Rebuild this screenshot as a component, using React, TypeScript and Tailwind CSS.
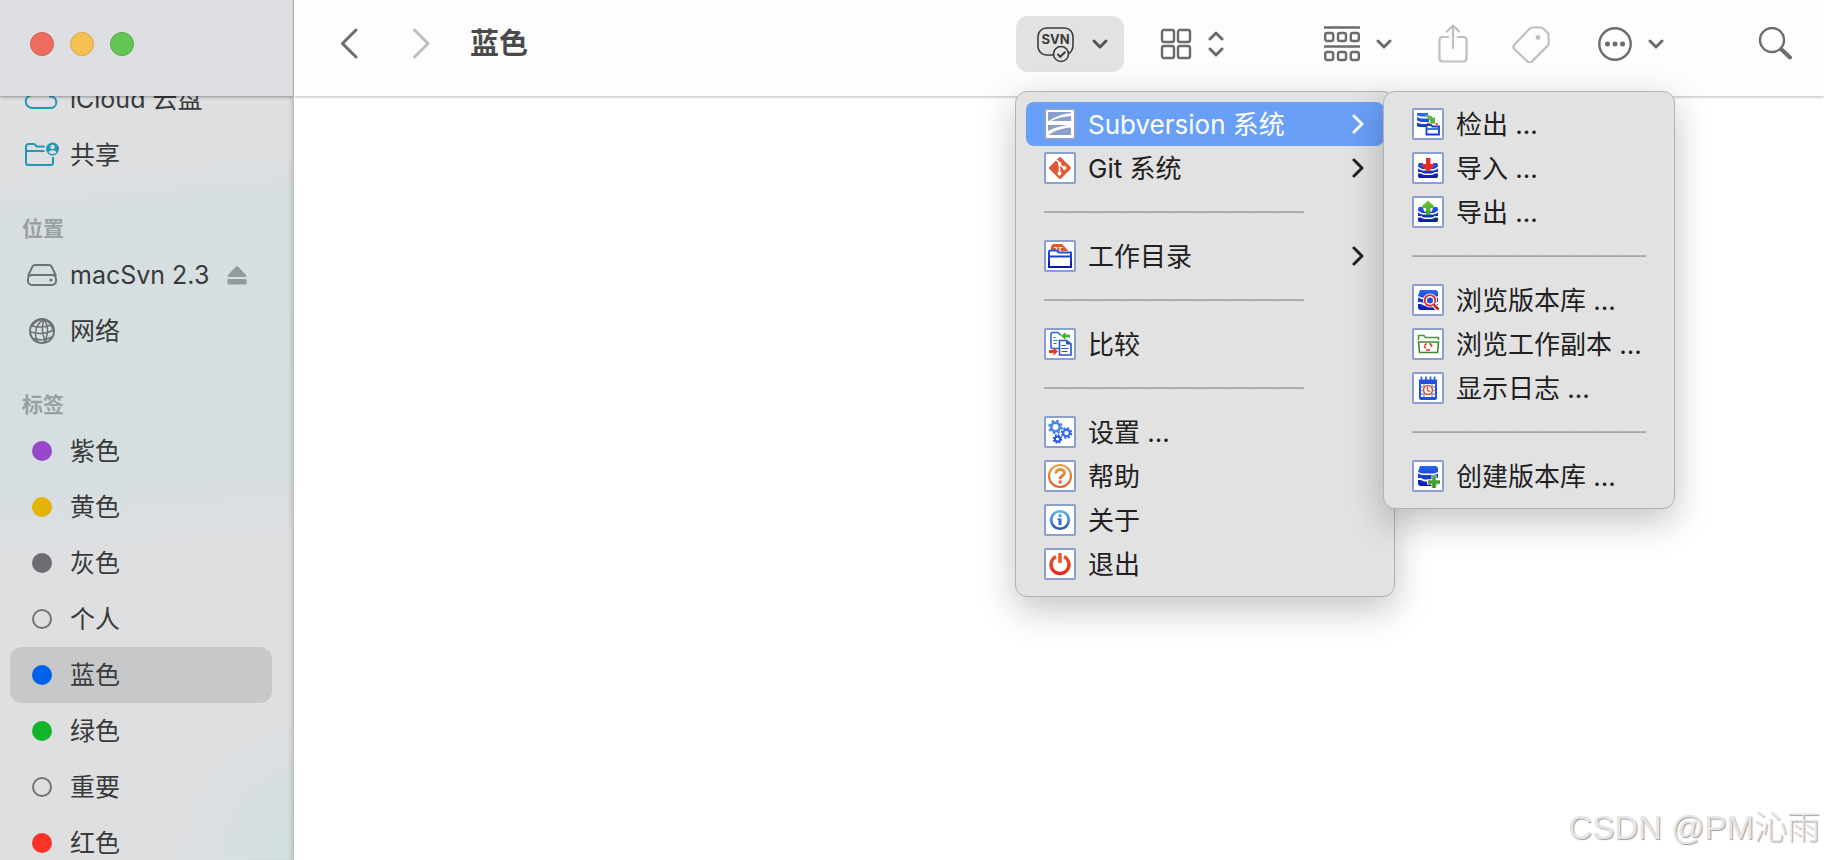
import React, { useState } from "react";
import clsx from "clsx";

type Tag = {
  name: string;
  dot: string;
};

type MenuEntry = {
  label: string;
  icon: React.ReactNode;
  submenu?: boolean;
};

const tags: Tag[] = [
  { name: "紫色", dot: "bg-[#9747c8]" },
  { name: "黄色", dot: "bg-[#e2b404]" },
  { name: "灰色", dot: "bg-[#6c6d72]" },
  { name: "个人", dot: "border-2 border-[#707274]" },
  { name: "蓝色", dot: "bg-[#0062ec]" },
  { name: "绿色", dot: "bg-[#11b52c]" },
  { name: "重要", dot: "border-2 border-[#707274]" },
  { name: "红色", dot: "bg-[#fb3228]" },
];

/* ---------- Sidebar icons ---------- */

const CloudIcon = () => (
  <svg width="36" height="36" viewBox="0 0 36 36" fill="none" stroke="#2298b4" strokeWidth="2">
    <path d="M8.500 27a6.500 6.500 0 0 1-.5-13 9.500 9.500 0 0 1 18.200 1.500A5.800 5.800 0 0 1 27.500 27z" />
  </svg>
);

const SharedIcon = () => (
  <svg width="36" height="36" viewBox="0 0 36 36" fill="none" stroke="#2298b4" strokeWidth="2">
    <path d="M20.500 9.500h-7.500l-3-2.500H4.500A2.500 2.500 0 0 0 2 9.500v16A2.500 2.500 0 0 0 4.500 28h22a2.500 2.500 0 0 0 2.500-2.500V20M2 14h18.500" />
    <circle cx="28.500" cy="12" r="6.500" fill="#2298b4" stroke="none" />
    <circle cx="28.500" cy="10" r="2.200" fill="#dedfe1" stroke="none" />
    <path d="M24.500 15.500a4.200 3.400 0 0 1 8 0 6 6 0 0 1-8 0z" fill="#dedfe1" stroke="none" />
  </svg>
);

const DriveIcon = () => (
  <svg width="36" height="36" viewBox="0 0 36 36" fill="none" stroke="#6d7274" strokeWidth="2">
    <path d="M4 19 8.300 9.800A3.200 3.200 0 0 1 11.200 8h13.600a3.200 3.200 0 0 1 2.900 1.800L32 19" />
    <rect x="4" y="18" width="28" height="10" rx="4" />
    <circle cx="27" cy="23" r="1.600" fill="#6d7274" stroke="none" />
  </svg>
);

const GlobeIcon = () => (
  <svg width="36" height="36" viewBox="0 0 36 36" fill="none" stroke="#6d7274" strokeWidth="1.500">
    <circle cx="18" cy="18" r="12" strokeWidth="2" />
    <path d="M20 6c-5 3-8 8-8.500 13.500-.2 3 .5 7 2 9.500M20 6c3 5 4 9 3.500 14-.4 4-2 7-4 9.500M20 6c-1.500 5-2 9-1.500 13s2 7.500 4 10M20 6c4 2 7.500 6 9 11M8 13c6 1.500 14 1 20-1M6.500 19c7 2 16 2 23.500-2M9 25.500c5 1.500 13 1.500 19-1.500M18 6c-4 1-8 4-10 7" />
  </svg>
);

const EjectIcon = () => (
  <svg width="20" height="20" viewBox="0 0 20 20" fill="#929c9e">
    <path d="M9 1.500a1.400 1.400 0 0 1 2 0l8 8.500c.8 1 .3 2-.8 2H1.800C.7 12 .2 11 1 10z" />
    <rect x="0.500" y="14" width="19" height="5.500" rx="1.200" />
  </svg>
);

/* ---------- Toolbar icons ---------- */

const ChevronDown: React.FC<{ dark?: boolean }> = ({ dark }) => (
  <svg width="16" height="12" viewBox="0 0 16 12" fill="none" stroke={dark ? "#555" : "#6c6c6c"} strokeWidth="3" strokeLinecap="round" strokeLinejoin="round">
    <path d="m2 3 6 6 6-6" />
  </svg>
);

const SvnIcon = () => (
  <svg width="38" height="38" viewBox="0 0 38 38" fill="none" stroke="#3c3c3c" strokeWidth="1.600">
    <path d="M18 30h-7.500A8.500 8.500 0 0 1 2 21.500V11.500A8.500 8.500 0 0 1 10.500 3h18a8.500 8.500 0 0 1 8.500 8.500V20c0 4-1.200 6.500-4 8.500" />
    <text x="19.500" y="19" textAnchor="middle" fontSize="13" fontWeight="700" fontFamily="Inter, sans-serif" fill="#3c3c3c" stroke="none">
      SVN
    </text>
    <circle cx="25" cy="29" r="7.500" fill="#e2e2e2" />
    <path d="m21.500 29 2.800 2.800 5-5" strokeWidth="2" />
  </svg>
);

const GridIcon = () => (
  <svg width="32" height="32" viewBox="0 0 32 32" fill="none" stroke="#6c6c6c" strokeWidth="2.400">
    <rect x="2" y="2" width="12" height="12" rx="2" />
    <rect x="18" y="2" width="12" height="12" rx="2" />
    <rect x="2" y="18" width="12" height="12" rx="2" />
    <rect x="18" y="18" width="12" height="12" rx="2" />
  </svg>
);

const UpDownIcon = () => (
  <svg width="16" height="28" viewBox="0 0 16 28" fill="none" stroke="#6c6c6c" strokeWidth="3" strokeLinecap="round" strokeLinejoin="round">
    <path d="m2 9 6-6 6 6M2 19l6 6 6-6" />
  </svg>
);

const GroupIcon = () => (
  <svg width="36" height="36" viewBox="0 0 36 36" fill="none" stroke="#6c6c6c" strokeWidth="2.400">
    <path d="M0 1.500h36M0 20.500h36" />
    <rect x="1.200" y="7" width="8" height="8" rx="2" />
    <rect x="14" y="7" width="8" height="8" rx="2" />
    <rect x="26.800" y="7" width="8" height="8" rx="2" />
    <rect x="1.200" y="26" width="8" height="8" rx="2" />
    <rect x="14" y="26" width="8" height="8" rx="2" />
    <rect x="26.800" y="26" width="8" height="8" rx="2" />
  </svg>
);

const ShareIcon = () => (
  <svg width="30" height="40" viewBox="0 0 30 40" fill="none" stroke="#bfbfbf" strokeWidth="2.200" strokeLinecap="round" strokeLinejoin="round">
    <path d="M10 13H4.500A3 3 0 0 0 1.500 16v18.500a3 3 0 0 0 3 3h21a3 3 0 0 0 3-3V16a3 3 0 0 0-3-3H20M15 24V2M9 7.500 15 1.500l6 6" />
  </svg>
);

const TagIcon = () => (
  <svg width="38" height="38" viewBox="0 0 38 38" fill="none" stroke="#bfbfbf" strokeWidth="2.200" strokeLinejoin="round">
    <path d="M20.500 2.500h8a4 4 0 0 1 3 1.200l4 4a4 4 0 0 1 1.100 2.800v7.800a4 4 0 0 1-1.200 2.800L19.800 36.600a3 3 0 0 1-4.200 0L2.400 24a3 3 0 0 1 0-4.200L17.600 3.700a4 4 0 0 1 2.900-1.200z" />
    <circle cx="26" cy="12.500" r="2.400" fill="#bfbfbf" stroke="none" />
  </svg>
);

const MoreIcon = () => (
  <svg width="34" height="34" viewBox="0 0 34 34" fill="#6c6c6c">
    <circle cx="17" cy="17" r="15.700" fill="none" stroke="#6c6c6c" strokeWidth="2.400" />
    <circle cx="9.500" cy="17" r="2.500" />
    <circle cx="17" cy="17" r="2.500" />
    <circle cx="24.500" cy="17" r="2.500" />
  </svg>
);

const SearchIcon = () => (
  <svg width="34" height="34" viewBox="0 0 34 34" fill="none" stroke="#6c6c6c">
    <circle cx="14" cy="13" r="12" strokeWidth="2.400" />
    <path d="m23 22 9 8.500" strokeWidth="4" strokeLinecap="round" />
  </svg>
);

/* ---------- Menu icons ---------- */

const IconTile: React.FC<{ children: React.ReactNode }> = ({ children }) => (
  <svg width="32" height="32" viewBox="0 0 32 32" fill="none" className="shrink-0">
    <defs>
      <linearGradient id="blueFade" x1="0" y1="5" x2="0" y2="28" gradientUnits="userSpaceOnUse">
        <stop stopColor="#2a6cf4" />
        <stop offset="1" stopColor="#0a12a8" />
      </linearGradient>
      <linearGradient id="greenFade" x1="0" y1="4" x2="0" y2="28" gradientUnits="userSpaceOnUse">
        <stop stopColor="#6cc83a" />
        <stop offset="1" stopColor="#349022" />
      </linearGradient>
      <linearGradient id="orangeFade" x1="0" y1="4" x2="0" y2="28" gradientUnits="userSpaceOnUse">
        <stop stopColor="#e8a548" />
        <stop offset="1" stopColor="#dc5c28" />
      </linearGradient>
      <linearGradient id="skyFade" x1="0" y1="6" x2="0" y2="26" gradientUnits="userSpaceOnUse">
        <stop stopColor="#5cb4ea" />
        <stop offset="1" stopColor="#2656b0" />
      </linearGradient>
      <linearGradient id="redFade" x1="0" y1="4" x2="0" y2="27" gradientUnits="userSpaceOnUse">
        <stop stopColor="#f0602c" />
        <stop offset="1" stopColor="#e02a1e" />
      </linearGradient>
    </defs>
    <rect x="1" y="1" width="30" height="30" rx="1" fill="#fff" stroke="#8a9fcb" strokeWidth="2" />
    {children}
  </svg>
);

const SubversionIcon = () => (
  <IconTile>
    <g fill="#8a9fcb">
      <path d="M4 4h23v1C19 6 11 8.500 4 13.500z" />
      <path d="M27 8v5H7c5-2.500 12-4.500 20-5z" />
      <path d="M4 17h21C18 18 10 19.500 4 23z" />
      <path d="M27 19.500V27H4.500C10 22.500 19 20 27 19.500z" />
    </g>
  </IconTile>
);

const GitIcon = () => (
  <IconTile>
    <rect x="7.800" y="7.800" width="16.400" height="16.400" rx="1.500" transform="rotate(45 16 16)" fill="#e25a35" />
    <path d="m12.500 8 3 3v11M15.500 12l4.500 4" stroke="#fff" strokeWidth="1.600" />
    <circle cx="15.500" cy="11.500" r="1.700" fill="#fff" />
    <circle cx="15.500" cy="21.500" r="1.900" fill="#fff" />
    <circle cx="20.500" cy="16" r="1.900" fill="#fff" />
  </IconTile>
);

const WorkDirIcon = () => (
  <IconTile>
    <path d="M7 11V6.500L9 4h9l6.500 7z" fill="#e2582a" />
    <path d="M10 7.500h2.500V11M14.500 7.500h4M16 8v3" stroke="#fff" strokeWidth="1.200" />
    <path d="M5 27V11.500L6 10.500h6.500l2.500 2h12V27z" fill="#fff" stroke="url(#blueFade)" strokeWidth="2" />
    <path d="M5 16.500h22" stroke="#1a44cc" strokeWidth="2" />
  </IconTile>
);

const CompareIcon = () => (
  <IconTile>
    <path d="M15 20.500H8.500A1.500 1.500 0 0 1 7 19V6a1.500 1.500 0 0 1 1.500-1.500H14l3 3" stroke="#2a66d4" strokeWidth="1.600" />
    <path d="M9.500 9.500h2M9.500 12.500h4M9.500 15.500h3" stroke="#2a66d4" />
    <path d="M15.500 12.500h7L27 16v11H15.500z" fill="#fff" stroke="#2258c8" strokeWidth="1.600" />
    <path d="M22 12v4.500h5z" fill="#2258c8" />
    <path d="M17.500 17.500h4M17.500 20.500h7M17.500 23.500h6" stroke="#2258c8" />
    <path d="m17 8 4.500-4v2.500H26v3h-4.500V12z" fill="#4cae34" />
    <path d="m14 23.500-4.500-4V22H5v3h4.500v2.500z" fill="#e23a28" />
  </IconTile>
);

const SettingsIcon = () => (
  <IconTile>
    <g stroke="#4486e8">
      <circle cx="11.500" cy="11" r="4.200" strokeWidth="2.600" />
      <circle cx="11.500" cy="11" r="6.200" strokeWidth="2.200" strokeDasharray="2.600 2.270" />
    </g>
    <g stroke="#2e6aec">
      <circle cx="22.500" cy="17" r="3.300" strokeWidth="2.200" />
      <circle cx="22.500" cy="17" r="4.900" strokeWidth="1.800" strokeDasharray="2.100 1.750" />
    </g>
    <g stroke="#2450e8">
      <circle cx="13.500" cy="23" r="2.600" strokeWidth="2" />
      <circle cx="13.500" cy="23" r="4" strokeWidth="1.600" strokeDasharray="1.700 1.440" />
    </g>
  </IconTile>
);

const HelpIcon = () => (
  <IconTile>
    <circle cx="16" cy="16" r="11" stroke="url(#orangeFade)" strokeWidth="2.200" />
    <path d="M12 13.500c0-5.500 8.500-5 8.500-.5 0 3-4.500 2.500-4.500 6" stroke="url(#orangeFade)" strokeWidth="3" />
    <rect x="14.500" y="20.500" width="3.200" height="3" fill="#de6a2c" />
  </IconTile>
);

const AboutIcon = () => (
  <IconTile>
    <circle cx="16" cy="16" r="8.800" stroke="url(#skyFade)" strokeWidth="2.600" />
    <circle cx="16" cy="11.700" r="1.700" fill="#4a9ede" />
    <path d="M13.500 14.500h4V21h-3v-5h-1z" fill="#2f6cc0" />
  </IconTile>
);

const QuitIcon = () => (
  <IconTile>
    <path d="M12 8.500a9 9 0 1 0 8 0" stroke="url(#redFade)" strokeWidth="3.400" />
    <rect x="14.200" y="5" width="3.600" height="10" rx="1" fill="#ee5a2c" />
  </IconTile>
);

const CheckoutIcon = () => (
  <IconTile>
    <path d="M5 5h11v3.500H9L5 7.500zM5 9l4 1.500h8V14H9l-4-1.500zM5 14.500l4 1.500h5v3H7l-2-1z" fill="url(#blueFade)" />
    <path d="M12.500 7.500C16 6 19.500 7.500 21 10l2-1v6.500h-6.500l2-1.500c-1-3-3-5-6-6.500z" fill="url(#greenFade)" />
    <path d="M15 15.500h2.500M23.500 16h2.500" stroke="#e23a28" strokeWidth="1.500" />
    <path d="M14.500 26.500V17h4.500l1.500 1.500h6.500v8z" fill="#fff" stroke="#1a3cc4" strokeWidth="1.800" />
    <path d="M14.500 21H27" stroke="#2a66e8" strokeWidth="1.800" />
  </IconTile>
);

const StackLayers = () => (
  <g fill="url(#blueFade)">
    <path d="M7 11h4l1 4.500h8l1-4.500h4l1 1.500v2L22 17H10l-4-2.500v-2z" />
    <path d="M6 16.500 10 18.500h12l4-2V20h-3l-3 1.500h-8L9 20H6z" />
    <path d="M6 21.500h3l3 1.500h8l3-1.500h3v3L25 26H7l-1-1.500z" />
  </g>
);

const ImportIcon = () => (
  <IconTile>
    <StackLayers />
    <path d="M14 6h4.500v6H22v2l-5.800 6L10 14v-2h4z" fill="#e22e22" />
  </IconTile>
);

const ExportIcon = () => (
  <IconTile>
    <StackLayers />
    <path d="M14 19h4.500v-7H22v-2l-5.800-5.500L10 10v2h4z" fill="url(#greenFade)" />
  </IconTile>
);

const Cylinder = () => (
  <g fill="url(#blueFade)">
    <path d="M8 6h16l2 1.500V12l-4 1.500H10L6 12z" />
    <path d="M6 13.500 10 15h12l4-1.500V18h-3l-3 1.500h-8L9 18H6z" />
    <path d="M6 20h3l3 1.500h8l3-1.500h3v4.500L24 26H8l-2-1.500z" />
  </g>
);

const BrowseRepoIcon = () => (
  <IconTile>
    <Cylinder />
    <circle cx="18" cy="16.500" r="7" fill="#fff" />
    <circle cx="18" cy="16.500" r="3" fill="#2450d8" />
    <circle cx="18" cy="16.500" r="5.300" stroke="#dc2c24" strokeWidth="1.800" />
    <path d="m21.500 20.500 5 5" stroke="#fff" strokeWidth="5" />
    <path d="m21.500 20.500 5 5" stroke="#c42420" strokeWidth="2.600" />
  </IconTile>
);

const BrowseCopyIcon = () => (
  <IconTile>
    <path d="M6.500 12V7.500h5.500l1.500 2h13V12" stroke="#44983a" strokeWidth="1.500" />
    <path d="M6.500 14h20l-1 10.500h-18z" stroke="#3c8c32" strokeWidth="1.600" />
    <path d="m14.500 15.500-2 2M12 18.500l2 1.500M17.500 15.500l2 1.500M19.500 17v2M14 22h4" stroke="#dc3428" strokeWidth="1.600" />
  </IconTile>
);

const LogIcon = () => (
  <IconTile>
    <path d="M7 7.500h18v19L23.500 28h-15L7 26.500z" fill="#2050e4" />
    <path d="M9.500 4.500V8M14 4.500V8M18.500 4.500V8M22.500 4.500V8" stroke="#2a66ec" strokeWidth="1.800" />
    <rect x="9" y="12" width="14" height="13" fill="#fff" />
    <path d="M9 15h14M9 18.500h14M9 22h14M12 12v13M20 12v13" stroke="#4a74ec" />
    <circle cx="16" cy="18" r="5.500" fill="#fff" />
    <circle cx="16" cy="18" r="4.500" stroke="#dc4c28" strokeWidth="1.600" />
    <path d="M15.500 15v3.200l2.500 1.800" stroke="#dc4c28" strokeWidth="1.400" />
  </IconTile>
);

const CreateRepoIcon = () => (
  <IconTile>
    <Cylinder />
    <path d="M19.500 15.500h5v4H29v5h-4.500V29h-5v-4.500H15v-5h4.500z" fill="#fff" />
    <path d="M20.200 16h3.600v4.200H28v3.600h-4.200V28h-3.600v-4.200H16v-3.600h4.200z" fill="url(#greenFade)" />
  </IconTile>
);

/* ---------- Menu data, null draws a divider ---------- */

const mainMenu: (MenuEntry | null)[] = [
  { label: "Subversion 系统", icon: <SubversionIcon />, submenu: true },
  { label: "Git 系统", icon: <GitIcon />, submenu: true },
  null,
  { label: "工作目录", icon: <WorkDirIcon />, submenu: true },
  null,
  { label: "比较", icon: <CompareIcon /> },
  null,
  { label: "设置 ...", icon: <SettingsIcon /> },
  { label: "帮助", icon: <HelpIcon /> },
  { label: "关于", icon: <AboutIcon /> },
  { label: "退出", icon: <QuitIcon /> },
];

const svnMenu: (MenuEntry | null)[] = [
  { label: "检出 ...", icon: <CheckoutIcon /> },
  { label: "导入 ...", icon: <ImportIcon /> },
  { label: "导出 ...", icon: <ExportIcon /> },
  null,
  { label: "浏览版本库 ...", icon: <BrowseRepoIcon /> },
  { label: "浏览工作副本 ...", icon: <BrowseCopyIcon /> },
  { label: "显示日志 ...", icon: <LogIcon /> },
  null,
  { label: "创建版本库 ...", icon: <CreateRepoIcon /> },
];

const MenuList: React.FC<{
  items: (MenuEntry | null)[];
  dashes: string;
  active?: string;
  onHover?: (label: string) => void;
}> = ({ items, dashes, active, onHover }) => (
  <ul>
    {items.map((item, idx) =>
      item ? (
        <li key={idx}>
          <button
            onMouseEnter={() => onHover?.(item.label)}
            className={clsx(
              "flex h-11 w-full items-center gap-3 rounded-lg pr-5 pl-[18px] text-left whitespace-nowrap",
              item.label === active ? "bg-[#6a9ff8] text-white" : "text-[#202020]"
            )}
          >
            {item.icon}
            <span className="flex-1 pt-0.5">{item.label}</span>
            {item.submenu && (
              <svg width="12" height="20" viewBox="0 0 12 20" fill="none" stroke="currentColor" strokeWidth="3" strokeLinecap="round" strokeLinejoin="round">
                <path d="m2 2 8 8-8 8" />
              </svg>
            )}
          </button>
        </li>
      ) : (
        <li
          key={idx}
          className="flex h-11 items-center pb-1 pl-[18px] font-['Liberation_Sans',sans-serif] whitespace-nowrap text-[#a8a8a8]"
        >
          {dashes}
        </li>
      )
    )}
  </ul>
);

const menuPanel =
  "absolute rounded-xl border border-[#b2b2b2] bg-[#e2e2e2] p-[10px] text-[26px] leading-9 shadow-[0_12px_36px_rgba(0,0,0,0.24)]";

const SvnMenu = () => {
  const [active, setActive] = useState("Subversion 系统");

  return (
    <div className={clsx(menuPanel, "top-[75px] -left-px z-20 w-[380px]")}>
      <MenuList items={mainMenu} dashes="——————————" active={active} onHover={setActive} />
      {active === "Subversion 系统" && (
        <div className={clsx(menuPanel, "-top-px left-[367px] w-[292px]")}>
          <MenuList items={svnMenu} dashes="—————————" />
        </div>
      )}
    </div>
  );
};

/* ---------- Sidebar ---------- */

const SidebarItem: React.FC<{
  icon: React.ReactNode;
  label: string;
  selected?: boolean;
  onClick?: () => void;
  extra?: React.ReactNode;
}> = ({ icon, label, selected, onClick, extra }) => (
  <li className="flex">
    <button
      onClick={onClick}
      className={clsx(
        "flex h-14 flex-1 items-center gap-[10px] rounded-xl px-[14px] text-left",
        selected && "bg-black/10"
      )}
    >
      <span className="flex w-9 justify-center">{icon}</span>
      <span>{label}</span>
      {extra && <span className="pl-2">{extra}</span>}
    </button>
  </li>
);

const SidebarHeading: React.FC<{ children: React.ReactNode }> = ({ children }) => (
  <h2 className="h-16 px-3 pt-7 text-[21px] leading-9 font-bold text-[#9aa0a2]">{children}</h2>
);

const Sidebar: React.FC<{ selected: string; onSelect: (name: string) => void }> = ({
  selected,
  onSelect,
}) => (
  <aside className="flex w-[294px] shrink-0 flex-col overflow-hidden border-r border-[#bcc0c2] bg-[#dedfe1]">
    <div className="z-10 flex h-24 shrink-0 items-center gap-4 bg-[#dedfe2] px-[30px] pb-2 shadow-[0_1px_3px_rgba(0,0,0,0.35)]">
      <button aria-label="Close" className="size-6 rounded-full border border-[#d35a50] bg-[#ed6b5f]" />
      <button aria-label="Minimize" className="size-6 rounded-full border border-[#dba64a] bg-[#f5c050]" />
      <button aria-label="Zoom" className="size-6 rounded-full border border-[#54a844] bg-[#62c655]" />
    </div>
    <div className="min-h-0 flex-1 overflow-hidden bg-[radial-gradient(circle_at_110%_100%,#cfe0e0_0,#d6dfe1_70px,transparent_150px),linear-gradient(175deg,#dedfe1_80px,#d7dee1_120px,#d5dfe0_270px,#d7dee1_400px,#dedfe1_470px)] shadow-[inset_-4px_0_4px_-2px_rgba(0,0,0,0.12)]">
      <nav className="-mt-[25px] pr-[21px] pl-[10px] text-[25px] leading-9 text-[#383a3b]">
        <ul>
          <SidebarItem icon={<CloudIcon />} label="iCloud 云盘" />
          <SidebarItem icon={<SharedIcon />} label="共享" />
        </ul>
        <SidebarHeading>位置</SidebarHeading>
        <ul>
          <SidebarItem icon={<DriveIcon />} label="macSvn 2.3" extra={<EjectIcon />} />
          <SidebarItem icon={<GlobeIcon />} label="网络" />
        </ul>
        <SidebarHeading>标签</SidebarHeading>
        <ul>
          {tags.map((tag) => (
            <SidebarItem
              key={tag.name}
              icon={<span className={clsx("size-5 rounded-full", tag.dot)} />}
              label={tag.name}
              selected={tag.name === selected}
              onClick={() => onSelect(tag.name)}
            />
          ))}
        </ul>
      </nav>
    </div>
  </aside>
);

/* ---------- Toolbar ---------- */

const Toolbar: React.FC<{ title: string }> = ({ title }) => {
  const [menuOpen, setMenuOpen] = useState(true);

  return (
    <header className="relative z-10 flex h-24 items-center justify-between bg-[#fdfdfd] pr-8 pb-2 pl-[46px] shadow-[0_1px_3px_rgba(0,0,0,0.28)]">
      <div className="flex items-center">
        <button aria-label="Back">
          <svg width="18" height="32" viewBox="0 0 18 32" fill="none" stroke="#6c6c6c" strokeWidth="3" strokeLinecap="round" strokeLinejoin="round">
            <path d="M16 2 2.500 15.500 16 29" />
          </svg>
        </button>
        <button aria-label="Forward" className="ml-[54px]">
          <svg width="18" height="32" viewBox="0 0 18 32" fill="none" stroke="#bcbcbc" strokeWidth="3" strokeLinecap="round" strokeLinejoin="round">
            <path d="m2.500 2 13.500 13.500L2.500 29" />
          </svg>
        </button>
        <h1 className="ml-10 text-[29px] leading-10 font-bold text-[#4b4b4b]">{title}</h1>
      </div>

      <div className="flex items-center">
        <div className="relative">
          <button
            aria-label="SVN menu"
            onClick={() => setMenuOpen(!menuOpen)}
            className="flex h-14 w-[108px] items-center justify-between rounded-xl bg-[#e2e2e2] pr-4 pl-5"
          >
            <SvnIcon />
            <ChevronDown dark />
          </button>
          {menuOpen && <SvnMenu />}
        </div>
        <button aria-label="View as icons" className="ml-9 flex items-center gap-4">
          <GridIcon />
          <UpDownIcon />
        </button>
        <button aria-label="Group" className="ml-[100px] flex items-center gap-4">
          <GroupIcon />
          <ChevronDown />
        </button>
        <button aria-label="Share" className="ml-[46px]">
          <ShareIcon />
        </button>
        <button aria-label="Tags" className="ml-[44px]">
          <TagIcon />
        </button>
        <button aria-label="More" className="ml-[48px] flex items-center gap-4">
          <MoreIcon />
          <ChevronDown />
        </button>
        <button aria-label="Search" className="ml-[94px]">
          <SearchIcon />
        </button>
      </div>
    </header>
  );
};

const App: React.FC = () => {
  const [selected, setSelected] = useState("蓝色");

  return (
    <div className="relative flex h-screen overflow-hidden bg-white font-['Inter','Noto_Sans_CJK_SC',sans-serif]">
      <Sidebar selected={selected} onSelect={setSelected} />
      <main className="min-w-0 flex-1">
        <Toolbar title={selected} />
      </main>
      <p className="absolute right-1 bottom-2 font-['Liberation_Sans','Noto_Sans_CJK_SC',sans-serif] text-[33px] leading-[48px] font-light text-[#e6e6e6] [text-shadow:1px_1px_1px_#9c9c9c]">
        CSDN @PM沁雨
      </p>
    </div>
  );
};

export default App;
